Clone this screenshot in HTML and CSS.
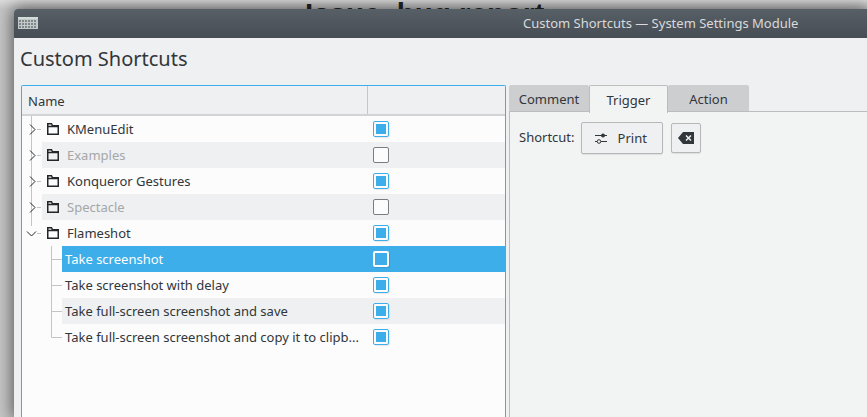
FILE: index.html
```html
<!DOCTYPE html>
<html lang="en">
<head>
<meta charset="utf-8">
<title>Custom Shortcuts</title>
<link rel="stylesheet" href="styles.css">
</head>
<body>
<div class="desktop">
  <div class="behind">Issue, bug report</div>
  <div class="window">
    <div class="titlebar">
      <svg class="kbd" width="20" height="12" viewBox="0 0 20 12">
        <rect width="20" height="12" fill="#c3c8c8"/>
        <rect width="20" height="2" fill="#d3dcd8"/>
        <path d="M1 4h18M1 7h18M1 10h18" stroke="#6a7175" stroke-width="1.400" stroke-dasharray="2 1"/>
      </svg>
      <div class="wintitle">Custom Shortcuts — System Settings Module</div>
    </div>
    <div class="content">
      <h1 class="heading">Custom Shortcuts</h1>
      <div class="columns">
        <div class="tree">
          <div class="thead">
            <div class="th-name">Name</div>
            <div class="th-check"></div>
          </div>
          <div class="row">
            <svg class="gutter" width="20" height="26" viewBox="0 0 20 26"><path class="line" d="M9.500 0V26M15 13.500H19"/><path class="arrow" d="M8 8.500L13 13.500L8 18.500"/></svg>
            <div class="cell">
              <svg class="folder" width="12" height="12" viewBox="0 0 12 12"><path d="M.75 11.250V.75H4.500L5.500 2.750H11.250V11.250ZM.75 3.500H11.250" /></svg>
              <span class="label">KMenuEdit</span>
              <span class="check on"></span>
            </div>
          </div>
          <div class="row">
            <svg class="gutter" width="20" height="26" viewBox="0 0 20 26"><path class="line" d="M9.500 0V26M15 13.500H19"/><path class="arrow" d="M8 8.500L13 13.500L8 18.500"/></svg>
            <div class="cell alt">
              <svg class="folder" width="12" height="12" viewBox="0 0 12 12"><path d="M.75 11.250V.75H4.500L5.500 2.750H11.250V11.250ZM.75 3.500H11.250" /></svg>
              <span class="label muted">Examples</span>
              <span class="check"></span>
            </div>
          </div>
          <div class="row">
            <svg class="gutter" width="20" height="26" viewBox="0 0 20 26"><path class="line" d="M9.500 0V26M15 13.500H19"/><path class="arrow" d="M8 8.500L13 13.500L8 18.500"/></svg>
            <div class="cell">
              <svg class="folder" width="12" height="12" viewBox="0 0 12 12"><path d="M.75 11.250V.75H4.500L5.500 2.750H11.250V11.250ZM.75 3.500H11.250" /></svg>
              <span class="label">Konqueror Gestures</span>
              <span class="check on"></span>
            </div>
          </div>
          <div class="row">
            <svg class="gutter" width="20" height="26" viewBox="0 0 20 26"><path class="line" d="M9.500 0V26M15 13.500H19"/><path class="arrow" d="M8 8.500L13 13.500L8 18.500"/></svg>
            <div class="cell alt">
              <svg class="folder" width="12" height="12" viewBox="0 0 12 12"><path d="M.75 11.250V.75H4.500L5.500 2.750H11.250V11.250ZM.75 3.500H11.250" /></svg>
              <span class="label muted">Spectacle</span>
              <span class="check"></span>
            </div>
          </div>
          <div class="row">
            <svg class="gutter" width="20" height="26" viewBox="0 0 20 26"><path class="line" d="M9.500 0V6M15 13.500H19"/><path class="arrow" d="M5 11.500L9.500 16L14 11.500"/></svg>
            <div class="cell">
              <svg class="folder" width="12" height="12" viewBox="0 0 12 12"><path d="M.75 11.250V.75H4.500L5.500 2.750H11.250V11.250ZM.75 3.500H11.250" /></svg>
              <span class="label">Flameshot</span>
              <span class="check on"></span>
            </div>
          </div>
          <div class="row child">
            <svg class="gutter" width="40" height="26" viewBox="0 0 40 26"><path class="line" d="M29.500 0V26M30 13.500H40"/></svg>
            <div class="cell selected">
              <span class="label sel">Take screenshot</span>
              <span class="check sel-check"></span>
            </div>
          </div>
          <div class="row child">
            <svg class="gutter" width="40" height="26" viewBox="0 0 40 26"><path class="line" d="M29.500 0V26M30 13.500H40"/></svg>
            <div class="cell">
              <span class="label">Take screenshot with delay</span>
              <span class="check on"></span>
            </div>
          </div>
          <div class="row child">
            <svg class="gutter" width="40" height="26" viewBox="0 0 40 26"><path class="line" d="M29.500 0V26M30 13.500H40"/></svg>
            <div class="cell alt">
              <span class="label">Take full-screen screenshot and save</span>
              <span class="check on"></span>
            </div>
          </div>
          <div class="row child">
            <svg class="gutter" width="40" height="26" viewBox="0 0 40 26"><path class="line" d="M29.500 0V13.500H40"/></svg>
            <div class="cell">
              <span class="label">Take full-screen screenshot and copy it to clipb...</span>
              <span class="check on"></span>
            </div>
          </div>
        </div>
        <div class="side">
          <div class="tabs">
            <div class="tab">Comment</div>
            <div class="tab active">Trigger</div>
            <div class="tab last">Action</div>
          </div>
          <div class="pane">
            <span class="field">Shortcut:</span>
            <button class="shortcut">
              <svg width="12" height="11" viewBox="0 0 12 11"><path class="ink" d="M0 2.500H12M0 8.500H2M6 8.500H12"/><circle class="solid" cx="8" cy="2.500" r="2"/><circle class="ink" cx="4" cy="8.500" r="1.800"/></svg>
              <span>Print</span>
            </button>
            <button class="clear">
              <svg width="16" height="12" viewBox="0 0 16 12"><path fill="#31363b" d="M5 0H16V12H5L0 6Z"/><path d="M8 3.500L13 8.500M13 3.500L8 8.500" stroke="#eff0f1" stroke-width="1.500"/></svg>
            </button>
          </div>
        </div>
      </div>
    </div>
  </div>
</div>
</body>
</html>
```
FILE: styles.css
```css
* { box-sizing: border-box; }
html, body { margin: 0; height: 100%; overflow: hidden; }
body { font-family: "Noto Sans", sans-serif; font-size: 13px; color: #31363b; }
.desktop { position: relative; width: 867px; height: 417px; overflow: hidden; background: linear-gradient(#dcdcdc, #c6c6c6 9px); }
.behind { position: absolute; left: 305px; top: -1px; font-family: "Liberation Sans", sans-serif; font-size: 29.5px; line-height: 30px; font-weight: 700; color: #232629; white-space: nowrap; }
.window { position: absolute; left: 14px; top: 9px; width: 853px; height: 408px; border-radius: 4px 0 0 0; background: #eff0f1; box-shadow: 0 0 16px 2px rgba(0,0,0,.55); overflow: visible; }
.titlebar { position: relative; height: 29px; display: flex; align-items: center; padding-left: 4px; border-radius: 4px 0 0 0; background: linear-gradient(#575f67, #474d54); }
.kbd { display: block; margin-top: -1px; }
.wintitle { position: absolute; left: 509px; top: 5px; line-height: 18px; color: #d8dadb; white-space: nowrap; }
.content { padding: 0 0 0 7px; }
.heading { margin: 0 0 0 -1px; height: 47px; padding-top: 6px; font-size: 20px; line-height: 30px; font-weight: 400; color: #31363b; }
.columns { display: flex; align-items: stretch; height: 332px; }
.tree { width: 485px; background: #fcfcfc; border: 1px solid #3daee9; border-bottom: 0; border-radius: 2px 2px 0 0; flex: none; }
.thead { display: flex; height: 30px; background: #eff0f1; border-bottom: 2px solid #d2d3d5; }
.th-name { width: 346px; padding-left: 6px; line-height: 30px; border-right: 1px solid #c6c7c9; }
.row { display: flex; height: 26px; }
.gutter { display: block; flex: none; }
.line { fill: none; stroke: #c3c4c5; stroke-width: 1; }
.arrow { fill: none; stroke: #232629; stroke-width: 1; }
.cell { flex: 1; min-width: 0; display: flex; align-items: center; padding-left: 5px; position: relative; }
.child .cell { padding-left: 3px; }
.alt { background: #eff0f1; }
.selected { background: #3daee9; }
.folder { display: block; flex: none; margin-right: 8px; }
.folder path { fill: none; stroke: #232629; stroke-width: 1.500; }
.label { line-height: 18px; white-space: nowrap; }
.muted { color: #a5a7a9; }
.sel { color: #fcfcfc; }
.check { position: absolute; left: 331px; top: 5px; width: 16px; height: 16px; border: 1px solid #7b7e81; border-radius: 2px; background: #fcfcfc; }
.child .check { left: 311px; }
.check.on { border-color: #3daee9; box-shadow: 1px 1px 1px rgba(0,0,0,.08); }
.check.on::after { content: ""; position: absolute; left: 2px; top: 2px; width: 10px; height: 10px; background: #3daee9; }
.sel-check { border-color: #fcfcfc; border-width: 2px; background: #3daee9; box-shadow: 1px 1px 1px rgba(0,0,0,.1); }
.side { flex: 1; min-width: 0; margin-left: 3px; display: flex; flex-direction: column; }
.tabs { display: flex; height: 27px; }
.tab { width: 80px; height: 27px; line-height: 28px; text-align: center; background: #cdcecf; border-radius: 2px 2px 0 0; border-bottom: 1px solid #bcbdbe; }
.tab.active { width: 79px; background: #f2f3f3; border: 1px solid #bcbdbe; border-bottom: 0; line-height: 28px; position: relative; z-index: 1; height: 28px; }
.tab.last { width: 81px; }
.pane { flex: 1; background: #f2f3f3; border-left: 1px solid #bcbdbe; border-top: 1px solid #bcbdbe; margin-top: -1px; display: flex; align-items: flex-start; padding: 10px 0 0 9px; }
.field { line-height: 30px; margin-right: 6px; }
button { font: inherit; color: inherit; padding: 0; }
.shortcut { width: 82px; height: 32px; display: flex; align-items: center; gap: 11px; padding-left: 13px; background: #eff0f1; border: 1px solid #b6b7b9; border-radius: 2px; box-shadow: 0 1px 1px rgba(0,0,0,.08); }
.clear { width: 30px; height: 30px; margin-left: 8px; margin-top: 1px; display: flex; align-items: center; justify-content: center; background: #eff0f1; border: 1px solid #b6b7b9; border-radius: 2px; box-shadow: 0 1px 1px rgba(0,0,0,.08); }
path.ink, circle.ink { fill: none; stroke: #31363b; stroke-width: 1; }
circle.solid { fill: #31363b; }
```
